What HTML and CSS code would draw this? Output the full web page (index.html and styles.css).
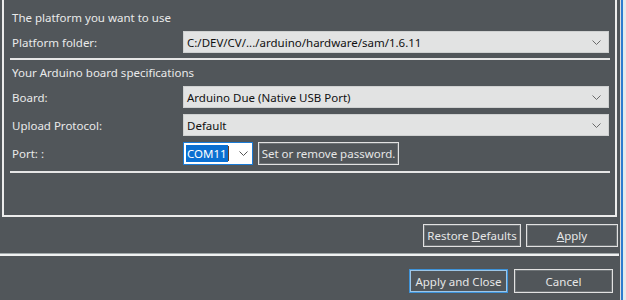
FILE: index.html
```html
<!DOCTYPE html>
<html>
<head>
<meta charset="utf-8">
<link rel="stylesheet" href="styles.css">
</head>
<body>
<div class="window">
  <div class="main">
    <div class="panel">
      <div class="section-title">The platform you want to use</div>
      <div class="row first">
        <span class="label">Platform folder:</span>
        <div class="combo"><span>C:/DEV/CV/.../arduino/hardware/sam/1.6.11</span><svg class="chev" width="9" height="5" viewBox="0 0 9 5"><polyline points="0.5,0.5 4.5,4.5 8.5,0.5" fill="none" stroke="#6a6a6a" stroke-width="1"/></svg></div>
      </div>
      <div class="sep"></div>
      <div class="section-title t2">Your Arduino board specifications</div>
      <div class="rows">
        <div class="row">
          <span class="label">Board:</span>
          <div class="combo"><span>Arduino Due (Native USB Port)</span><svg class="chev" width="9" height="5" viewBox="0 0 9 5"><polyline points="0.5,0.5 4.5,4.5 8.5,0.5" fill="none" stroke="#6a6a6a" stroke-width="1"/></svg></div>
        </div>
        <div class="row">
          <span class="label">Upload Protocol:</span>
          <div class="combo"><span>Default</span><svg class="chev" width="9" height="5" viewBox="0 0 9 5"><polyline points="0.5,0.5 4.5,4.5 8.5,0.5" fill="none" stroke="#6a6a6a" stroke-width="1"/></svg></div>
        </div>
        <div class="row port">
          <span class="label">Port: :</span>
          <div class="port-controls">
            <div class="port-combo"><span class="selected">COM11</span><span class="caret"></span><svg class="chev" width="9" height="5" viewBox="0 0 9 5"><polyline points="0.5,0.5 4.5,4.5 8.5,0.5" fill="none" stroke="#555" stroke-width="1"/></svg></div>
            <button class="btn pw">Set or remove password.</button>
          </div>
        </div>
      </div>
      <div class="sep sep2"></div>
    </div>
    <div class="actions">
      <button class="btn restore">Restore <u>D</u>efaults</button>
      <button class="btn apply"><u>A</u>pply</button>
    </div>
    <div class="divider"></div>
    <div class="actions final">
      <button class="btn wide default">Apply and Close</button>
      <button class="btn wide">Cancel</button>
    </div>
  </div>
  <div class="edge"></div>
</div>
</body>
</html>
```

FILE: styles.css
```css
html, body {
  margin: 0;
  padding: 0;
}
body {
  background: #51565a;
  font-family: "Noto Sans", "Open Sans", sans-serif;
  font-size: 11.5px;
  color: #e9eaea;
}
.window {
  display: flex;
  height: 300px;
  overflow: hidden;
}
.main {
  width: 619px;
  display: flex;
  flex-direction: column;
}
.panel {
  box-sizing: border-box;
  margin-left: 2px;
  width: 615px;
  height: 217px;
  border: 2px solid #ececec;
  border-top: none;
  padding: 0 5px 0 6px;
}
.section-title {
  padding: 10px 0 0 2px;
  line-height: 16px;
}
.section-title.t2 {
  padding-top: 5px;
}
.row {
  display: grid;
  grid-template-columns: 173px 1fr;
  align-items: center;
  height: 22px;
}
.row.first {
  margin-top: 5px;
}
.label {
  padding-left: 2px;
}
.sep {
  margin-top: 5px;
  height: 2px;
  background: #e6e6e6;
}
.sep.sep2 {
  margin-top: 6px;
}
.rows {
  margin-top: 5px;
  display: flex;
  flex-direction: column;
  gap: 6px;
}
.combo {
  box-sizing: border-box;
  height: 22px;
  margin-right: 1px;
  background: #e2e3e3;
  border: 1px solid #cfd1d1;
  color: #111;
  padding: 0 7px 0 3px;
  display: flex;
  align-items: center;
  justify-content: space-between;
}
.row.port {
  height: 23px;
}
.port-controls {
  display: flex;
  gap: 5px;
  height: 23px;
}
.port-combo {
  box-sizing: border-box;
  width: 70px;
  height: 23px;
  background: #ffffff;
  border: 1px solid #1a7bd6;
  display: flex;
  align-items: center;
  padding-left: 2px;
}
.selected {
  background: #0a6fd1;
  color: #ffffff;
  padding: 0 1px;
  line-height: 17px;
}
.caret {
  width: 1px;
  height: 15px;
  background: #6b3b1e;
}
.port-combo .chev {
  margin-left: 10px;
}
.btn {
  box-sizing: border-box;
  font-family: inherit;
  font-size: 11.5px;
  color: #e6e7e7;
  background: #51565a;
  border: 1px solid #e2e2e2;
  box-shadow: inset 0 0 0 1px #6f7477;
  padding: 0;
  height: 23px;
}
.btn.pw {
  width: 141px;
}
.actions {
  margin-top: 7px;
  display: flex;
  justify-content: flex-end;
  gap: 5px;
  padding-right: 1px;
}
.btn.restore {
  width: 98px;
}
.btn.apply {
  width: 92px;
}
.divider {
  margin-top: 6px;
  height: 2px;
  border-top: 1px solid #a3aaac;
  background: #f0f1f1;
}
.actions.final {
  margin-top: 13px;
  gap: 6px;
  padding-right: 6px;
}
.btn.wide {
  width: 99px;
  height: 24px;
}
.btn.default {
  border-color: #3d92d8;
  box-shadow: inset 0 0 0 1px #9cc6e8;
}
.edge {
  margin-left: 1px;
  width: 2px;
  border-left: 1px solid #d9dcde;
  border-right: 3px solid #e6e9eb;
  background: #2d7ccf;
}
```
